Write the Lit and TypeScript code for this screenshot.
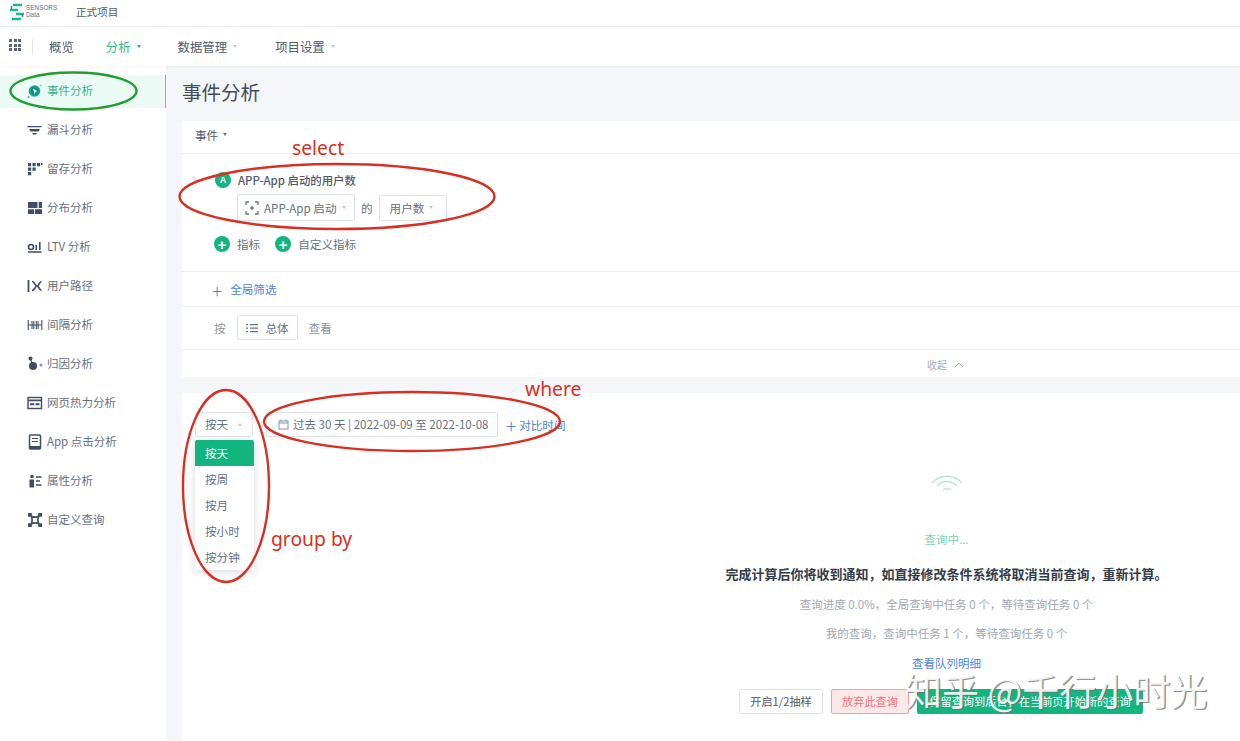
import { LitElement, html, css, svg } from "lit";
import { customElement } from "lit/decorators.js";

const C = "#3f4e68";
const ic: Record<string, unknown> = {
  event: svg`<circle cx="8.500" cy="9" r="5.800" fill="#13a78f"/><circle cx="8.500" cy="9" r="3.400" fill="#0f7f86"/><path d="M7 6.500l4.500 2.800-2 .7-1 2.200z" fill="#fff"/><circle cx="2.500" cy="15" r="1" fill="#5b9bdc"/><circle cx="15" cy="3.500" r="1" fill="#7fd4bb"/>`,
  funnel: svg`<path d="M1.500 5h14v1.200h-14zM3 8h11l-1.500 2.500h-8zM6 12h5l-1 1.600H7z" fill="${C}"/>`,
  retain: svg`<path d="M2 3h3.200v3.200H2zM6.500 3h3.200v3.200H6.500zM11 3h3.200v3.200H11zM15 3h1.500v2H15zM2 7.500h3.200v3.200H2zM6.500 7.500h3.200v3.200H6.500zM2 12h3.200v3.200H2z" fill="${C}"/>`,
  dist: svg`<path d="M2 3h9.500v6H2zM12.700 3H16v6h-3.300zM2 10.200h6V15H2zM9 10.200h7V15H9z" fill="${C}"/>`,
  ltv: svg`<circle cx="5" cy="9" r="2.500" fill="none" stroke="${C}" stroke-width="1.600"/><path d="M9.500 7h1.600v5H9.500zM13 4h1.600v8H13zM2 13.300h13.500v1.500H2z" fill="${C}"/>`,
  path: svg`<path d="M2.500 3v12" stroke="${C}" stroke-width="1.800"/><path d="M6 4.500c3 0 3 4.500 5 4.500s2-4 4.500-4.500M6 13.500c3 0 3-4.500 5-4.500s2 4 4.500 4.500" stroke="${C}" stroke-width="1.700" fill="none"/>`,
  gap: svg`<path d="M2.200 4v10M15.800 4v10M6 5v8M7.800 5v8M10.300 5v8M12.100 5v8M2.200 9h13.600" stroke="${C}" stroke-width="1.100" fill="none"/>`,
  attr: svg`<circle cx="4.500" cy="3.500" r="2" fill="${C}"/><circle cx="7" cy="11" r="4" fill="${C}"/><circle cx="15" cy="10" r="1.500" fill="#8a95a5"/><path d="M4.500 4l2 6" stroke="${C}" stroke-width="1.200"/>`,
  heat: svg`<rect x="2" y="3.500" width="13.500" height="11" fill="none" stroke="${C}" stroke-width="1.400"/><path d="M2 5.500h13.500v1.700H2zM4 9.300h4.300v2H4zM9.500 9.300h4v2h-4z" fill="${C}"/>`,
  app: svg`<rect x="3.500" y="2" width="11" height="14" rx="1" fill="none" stroke="${C}" stroke-width="1.500"/><path d="M6 5.500h6M6 8.500h6" stroke="${C}" stroke-width="1.200"/><path d="M3.500 13h11v3h-11z" fill="${C}"/>`,
  prop: svg`<circle cx="6" cy="4.500" r="1.800" fill="${C}"/><path d="M3.500 7.500h4.500v8H3.500z" fill="${C}"/><path d="M10 5h5.500M10 9h4M10 13h5.500" stroke="${C}" stroke-width="1.400"/>`,
  custom: svg`<path d="M5 5c2 1.500 6 1.500 8 0M5 13c2-1.500 6-1.500 8 0M5 5c1.500 2 1.500 6 0 8M13 5c-1.500 2-1.500 6 0 8" fill="none" stroke="${C}" stroke-width="1.700"/><path d="M2 2h3.800v3.800H2zM12.200 2H16v3.800h-3.800zM2 12.200h3.800V16H2zM12.200 12.200H16V16h-3.800z" fill="${C}"/>`,
};

const side: [string, string][] = [
  ["event", "事件分析"], ["funnel", "漏斗分析"], ["retain", "留存分析"], ["dist", "分布分析"],
  ["ltv", "LTV 分析"], ["path", "用户路径"], ["gap", "间隔分析"], ["attr", "归因分析"],
  ["heat", "网页热力分析"], ["app", "App 点击分析"], ["prop", "属性分析"], ["custom", "自定义查询"],
];

@customElement("app-root")
export class AppRoot extends LitElement {
  static styles = css`
    :host { display: block; position: relative; width: 1240px; height: 741px; overflow: hidden; background: #f4f6f9;
      font-family: "Noto Sans CJK SC", "Noto Sans", sans-serif; font-size: 11.600px; color: #66717f; }
    .top { background: #fff; border-bottom: 1px solid #eef0f3; display: flex; align-items: center; padding: 0 0 3px 9px; box-sizing: content-box; height: 23px; }
    .logo { display: flex; align-items: center; width: 67px; gap: 1px; }
    .logoText { font: 6.400px/6.500px "Liberation Sans", sans-serif; color: #66717f; }
    .proj { font-size: 10.600px; color: #4f5b6b; }
    .nav { height: 39px; background: #fff; display: flex; align-items: center; box-shadow: 0 1px 3px rgba(60,80,110,.06); position: relative; font-size: 12.400px; }
    .grid { margin-left: 9px; display: grid; grid-template-columns: repeat(3, 3px); gap: 1.500px; width: 13px; margin-top: -3px; }
    .grid i { height: 3px; background: #5a6678; }
    .sep { width: 1px; height: 16px; background: #e4e7ec; margin-left: 10px; }
    .nav span { display: inline-flex; align-items: center; gap: 6px; color: #4f5b6b; }
    .tri { width: 0; height: 0; border: 2.500px solid transparent; border-top: 3px solid #c3c9d2; border-bottom: 0; }
    .tri.dark { border-top-color: #6a7585; }
    .tri.green { border-top-color: #13b57f; }
    .body { display: flex; height: 676px; }
    .sidebar { width: 166px; flex: none; background: #fff; padding-top: 9px; box-sizing: border-box; }
    .sitem { height: 33px; margin-bottom: 6px; padding: 0 0 4px 26px; display: flex; align-items: center; gap: 3px; color: #66717f; box-sizing: border-box; font-size: 11.500px; }
    .sitem.on { background: #ecfaf5; color: #2fb98c; border-right: 1px solid #5ccaa5; }
    .sitem svg { width: 18px; height: 18px; flex: none; margin-top: 2px; }
    .main { flex: 1; padding-left: 16px; min-width: 0; }
    h1 { margin: 0; height: 55px; padding-bottom: 4px; box-sizing: border-box; display: flex; align-items: center; font-size: 19.500px; font-weight: 400; color: #414c5c; }
    .card { background: #fff; height: 256px; display: flex; flex-direction: column; }
    .evrow { padding: 0 0 5px 13px; border-bottom: 1px solid #eceff3; display: flex; align-items: center; gap: 5px; box-sizing: content-box; height: 27px; color: #4f5b6b; flex: none; }
    .metric { height: 118px; border-bottom: 1px solid #eceff3; padding: 18px 0 0 32px; box-sizing: border-box; flex: none; position: relative; }
    .chev { position: absolute; left: 10px; top: 21px; width: 6px; height: 9px; }
    .mhead { display: flex; align-items: center; gap: 7px; font-weight: 500; color: #4f5b6b; height: 17px; margin: -1px 0 6px 1px; font-size: 11.400px; }
    .badge { width: 16px; height: 16px; border-radius: 50%; background: #13b57f; color: #fff; display: inline-flex; align-items: center; justify-content: center; font: 700 9px "Liberation Sans", sans-serif; flex: none; }
    .mrow { display: flex; align-items: center; padding-left: 23px; gap: 6px; color: #66717f; }
    .btn { display: inline-flex; align-items: center; gap: 5px; border: 1px solid #dfe3e9; border-radius: 2px; height: 25px; box-sizing: border-box; background: #fff; color: #66717f; }
    .add { display: flex; align-items: center; margin-top: 15px; gap: 7px; color: #66717f; }
    .add .badge { font-size: 15px; font-weight: 700; }
    .add .g2 { margin-left: 8px; }
    .filter { height: 35px; border-bottom: 1px solid #eceff3; display: flex; align-items: center; box-sizing: border-box; padding-left: 30px; gap: 8px; color: #4a86d8; flex: none; }
    .plus { font-size: 19px; font-weight: 300; line-height: 17px; color: #4a86d8; }
    .by { height: 43px; border-bottom: 1px solid #eceff3; box-sizing: border-box; display: flex; align-items: center; padding: 0 0 1px 32px; color: #8b94a0; flex: none; }
    .by .btn { width: 61px; margin: 0 11px 0 11px; justify-content: center; gap: 8px; }
    .coll { flex: 1; display: flex; align-items: center; justify-content: center; gap: 7px; color: #a4acb7; font-size: 10px; padding: 2px 0 0 469px; box-sizing: border-box; }
    .coll svg { width: 10px; height: 6px; }
    .result { margin-top: 16px; background: #fff; height: 348px; position: relative; display: flex; flex-direction: column; align-items: center; }
    .tools { align-self: flex-start; display: flex; margin: 19px 0 0 13px; align-items: center; }
    .sel { width: 58px; justify-content: flex-start; padding: 0 0 1px 9px; gap: 10px; }
    .date { width: 232px; margin-left: 13px; justify-content: flex-start; padding: 0 0 1px 11px; gap: 4px; font-size: 11.500px; }
    .date svg { width: 11px; height: 11px; }
    .cmp { color: #4a86d8; margin-left: 8px; display: flex; align-items: center; gap: 3px; }
    .menu { position: absolute; left: 13px; top: 47px; width: 59px; background: #fff; box-shadow: 0 2px 8px rgba(60,70,90,.2); border-radius: 2px; overflow: hidden; z-index: 1; }
    .menu div { height: 26px; display: flex; align-items: center; padding-left: 10px; color: #66717f; }
    .menu .on { background: #13b57f; color: #fff; }
    .center { margin-left: 471px; width: 500px; display: flex; flex-direction: column; align-items: center; }
    .wifi { width: 34px; height: 22px; margin-top: 34px; }
    .load { color: #7dd3b3; margin-top: 37px; height: 18px; line-height: 18px; font-size: 11.500px; }
    .notice { font-weight: 700; color: #333c4a; margin-top: 17px; height: 18px; line-height: 18px; font-size: 13px; white-space: nowrap; }
    .grey { color: #a0a8b4; height: 18px; line-height: 18px; white-space: nowrap; font-size: 11.500px; }
    .g1 { margin-top: 12px; }
    .g2b { margin-top: 11px; }
    .link { color: #4a86d8; margin-top: 12px; height: 18px; line-height: 18px; font-size: 11.500px; }
    .acts { display: flex; gap: 8px; margin: 17px 11px 0 0; height: 25px; align-self: center; font-size: 11.200px; }
    .acts > div { height: 25px; display: flex; align-items: center; justify-content: center; box-sizing: border-box; border-radius: 2px; white-space: nowrap; padding-bottom: 1px; }
    .a1 { width: 84px; border: 1px solid #dfe3e9; color: #4f5b6b; }
    .a2 { width: 78px; border: 1px solid #f2a0a6; background: #fde8e9; color: #f0717a; }
    .a3 { width: 226px; background: #13b57f; color: #fff; }
    .anno { position: absolute; font-family: "Noto Sans", sans-serif; color: #d92f22; font-size: 19.300px; line-height: 22px; z-index: 3; }
    .wm { position: absolute; left: 905px; top: 667px; font-size: 37px; line-height: 46px; color: rgba(255,255,255,.88); text-shadow: 1.500px 1px 0 rgba(110,110,110,.75); z-index: 4; white-space: nowrap; }
    .ov { position: absolute; left: 0; top: 0; width: 1240px; height: 741px; z-index: 3; pointer-events: none; }
  `;

  render() {
    return html`
      <div class="top">
        <div class="logo">
          <svg width="16" height="20" viewBox="0 0 16 20"><path d="M4 3h9M1 8h8M7 12h8M3 17h9" stroke="#18b98a" stroke-width="2.400" fill="none"/><path d="M2.500 4v3M13.500 12v3" stroke="#2a8fa0" stroke-width="1.500"/></svg>
          <div class="logoText">SENSORS<br>Data</div>
        </div>
        <div class="proj">正式项目</div>
      </div>
      <div class="nav">
        <div class="grid">${Array.from({ length: 9 }, () => html`<i></i>`)}</div>
        <div class="sep"></div>
        <span style="margin-left:16px">概览</span>
        <span style="margin-left:32px;color:#2fb98c">分析<i class="tri green"></i></span>
        <span style="margin-left:37px">数据管理<i class="tri"></i></span>
        <span style="margin-left:38px">项目设置<i class="tri"></i></span>
      </div>
      <div class="body">
        <div class="sidebar">
          ${side.map(([k, t], i) => html`<div class="sitem ${i === 0 ? "on" : ""}"><svg viewBox="0 0 18 18">${ic[k]}</svg>${t}</div>`)}
        </div>
        <div class="main">
          <h1>事件分析</h1>
          <div class="card">
            <div class="evrow">事件<i class="tri dark"></i></div>
            <div class="metric">
              <svg class="chev" viewBox="0 0 6 9"><path d="M1 1l3.500 3.500L1 8" stroke="#c3c9d2" fill="none"/></svg>
              <div class="mhead"><span class="badge">A</span>APP-App 启动的用户数</div>
              <div class="mrow">
                <div class="btn" style="width:118px;padding-left:7px;height:27px">
                  <svg width="14" height="14" viewBox="0 0 14 14"><path d="M1 4V1h3M10 1h3v3M13 10v3h-3M4 13H1v-3" stroke="#6a7585" fill="none" stroke-width="1.300"/><circle cx="7" cy="7" r="1.800" fill="#6a7585"/></svg>
                  APP-App 启动<i class="tri"></i>
                </div>
                <span>的</span>
                <div class="btn" style="width:68px;padding-left:10px;height:26px">用户数<i class="tri"></i></div>
              </div>
              <div class="add">
                <span class="badge">+</span>指标
                <span class="badge g2">+</span>自定义指标
              </div>
            </div>
            <div class="filter"><span class="plus">+</span>全局筛选</div>
            <div class="by">按
              <div class="btn">
                <svg width="12" height="10" viewBox="0 0 12 10"><path d="M0 1h2v1.200H0zM0 4.500h2v1.200H0zM0 8h2v1.200H0zM4 1h8v1.200H4zM4 4.500h8v1.200H4zM4 8h8v1.200H4z" fill="#66717f"/></svg>
                总体
              </div>
              查看
            </div>
            <div class="coll">收起
              <svg viewBox="0 0 10 6"><path d="M1 5l4-4 4 4" stroke="#a4acb7" fill="none"/></svg>
            </div>
          </div>
          <div class="result">
            <div class="tools">
              <div class="btn sel">按天<i class="tri" style="transform:rotate(180deg)"></i></div>
              <div class="btn date">
                <svg viewBox="0 0 11 11"><rect x="1" y="2" width="9" height="8" fill="none" stroke="#8a95a5"/><path d="M1 4h9M3 0.500v2M8 0.500v2" stroke="#8a95a5"/></svg>
                过去 30 天 | 2022-09-09 至 2022-10-08
              </div>
              <div class="cmp"><span class="plus">+</span>对比时间</div>
            </div>
            <div class="menu">
              <div class="on">按天</div><div>按周</div><div>按月</div><div>按小时</div><div>按分钟</div>
            </div>
            <div class="center">
              <svg class="wifi" viewBox="0 0 34 22"><path d="M2 12C10 3 24 3 32 12M7 15C13 9 21 9 27 15M13 19c2-2 6-2 8 0" stroke="#b5e6d3" stroke-width="1.300" fill="none"/></svg>
              <div class="load">查询中...</div>
              <div class="notice">完成计算后你将收到通知，如直接修改条件系统将取消当前查询，重新计算。</div>
              <div class="grey g1">查询进度 0.0%，全局查询中任务 0 个，等待查询任务 0 个</div>
              <div class="grey g2b">我的查询，查询中任务 1 个，等待查询任务 0 个</div>
              <div class="link">查看队列明细</div>
              <div class="acts">
                <div class="a1">开启1/2抽样</div>
                <div class="a2">放弃此查询</div>
                <div class="a3">保留查询到后台，在当前页开始新的查询</div>
              </div>
            </div>
          </div>
        </div>
      </div>
      <svg class="ov" viewBox="0 0 1240 741">
        <ellipse cx="73.500" cy="91" rx="63" ry="18.500" fill="none" stroke="#1f9e2d" stroke-width="2.400"/>
        <ellipse cx="337" cy="196.500" rx="157.500" ry="32.500" fill="none" stroke="#d92f22" stroke-width="2.400"/>
        <ellipse cx="412" cy="421.500" rx="148" ry="29.500" fill="none" stroke="#d92f22" stroke-width="2.400"/>
        <ellipse cx="226" cy="486" rx="43" ry="96" fill="none" stroke="#d92f22" stroke-width="2.400"/>
      </svg>
      <div class="anno" style="left:292px;top:137px">select</div>
      <div class="anno" style="left:525px;top:378px">where</div>
      <div class="anno" style="left:271px;top:528px">group by</div>
      <div class="wm">知乎 @千行小时光</div>
    `;
  }
}
